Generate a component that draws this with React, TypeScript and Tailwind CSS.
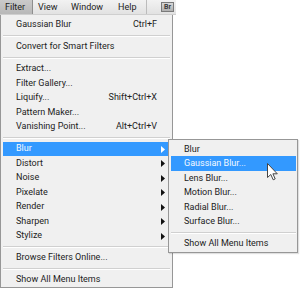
import React from "react";

type Item =
  | { t: "item"; label: string; shortcut?: string; sub?: boolean; active?: boolean }
  | { t: "sep" };

const mainItems: Item[] = [
  { t: "item", label: "Gaussian Blur", shortcut: "Ctrl+F" },
  { t: "sep" },
  { t: "item", label: "Convert for Smart Filters" },
  { t: "sep" },
  { t: "item", label: "Extract..." },
  { t: "item", label: "Filter Gallery..." },
  { t: "item", label: "Liquify...", shortcut: "Shift+Ctrl+X" },
  { t: "item", label: "Pattern Maker..." },
  { t: "item", label: "Vanishing Point...", shortcut: "Alt+Ctrl+V" },
  { t: "sep" },
  { t: "item", label: "Blur", sub: true, active: true },
  { t: "item", label: "Distort", sub: true },
  { t: "item", label: "Noise", sub: true },
  { t: "item", label: "Pixelate", sub: true },
  { t: "item", label: "Render", sub: true },
  { t: "item", label: "Sharpen", sub: true },
  { t: "item", label: "Stylize", sub: true },
  { t: "sep" },
  { t: "item", label: "Browse Filters Online..." },
  { t: "sep" },
  { t: "item", label: "Show All Menu Items" },
];

const subItems: Item[] = [
  { t: "item", label: "Blur" },
  { t: "item", label: "Gaussian Blur...", active: true },
  { t: "item", label: "Lens Blur..." },
  { t: "item", label: "Motion Blur..." },
  { t: "item", label: "Radial Blur..." },
  { t: "item", label: "Surface Blur..." },
  { t: "sep" },
  { t: "item", label: "Show All Menu Items" },
];

function Arrow({ white }: { white?: boolean }) {
  return (
    <svg width="4" height="7" viewBox="0 0 4 7" className="absolute right-[5px] top-[4px]">
      <path d="M0 0 L4 3.5 L0 7 Z" fill={white ? "#ffffff" : "#111111"} />
    </svg>
  );
}

function MenuList({ items, pl }: { items: Item[]; pl: string }) {
  return (
    <>
      {items.map((it, i) =>
        it.t === "sep" ? (
          <div key={i} className="h-[7.5px] flex flex-col justify-center">
            <div className="h-px bg-[#d0d0d0]" />
            <div className="h-px bg-white" />
          </div>
        ) : (
          <div
            key={i}
            className={
              "relative h-[14.5px] flex items-center pr-[13px] " +
              pl +
              " " +
              (it.active ? "bg-[#3399ff] text-[#f4f9ff]" : "text-[#222222]")
            }
          >
            <span className="flex-1 whitespace-nowrap leading-none">{it.label}</span>
            {it.shortcut && <span className="whitespace-nowrap leading-none">{it.shortcut}</span>}
            {it.sub && <Arrow white={it.active} />}
          </div>
        )
      )}
    </>
  );
}

export default function App() {
  return (
    <div
      className="relative w-[300px] h-[289px] bg-white overflow-hidden text-[9px]"
      style={{ fontFamily: "Roboto, 'Noto Sans', sans-serif" }}
    >
      {/* Menu bar */}
      <div className="flex h-[15px] w-[176px] items-stretch bg-gradient-to-b from-[#f2f2f2] to-[#e2e2e2] border-b border-[#cfcfcf] text-[#222222]">
        <div className="w-[33px] pl-[5px] flex items-center bg-gradient-to-b from-[#cacaca] to-[#b8b8b8] border-r border-[#8e8e8e] leading-none">
          Filter
        </div>
        <div className="w-[33px] pl-[5px] flex items-center leading-none">View</div>
        <div className="w-[46px] pl-[5px] flex items-center leading-none">Window</div>
        <div className="w-[35px] pl-[6px] flex items-center leading-none border-r border-[#bcbcbc]">Help</div>
        <div className="flex items-center pl-[14px]">
          <div className="w-[13px] h-[10px] bg-gradient-to-b from-[#d8d8d8] to-[#b0b0b0] border border-[#7a7a7a] text-[7px] font-bold text-[#3a3a3a] flex items-center justify-center leading-none">
            Br
          </div>
        </div>
      </div>

      {/* Main dropdown */}
      <div className="w-[173px] bg-[#f0f0f0] border-l border-r border-b border-[#979797] px-[2px] pt-[2.5px] pb-0">
        <MenuList items={mainItems} pl="pl-[13px]" />
      </div>

      {/* Submenu */}
      <div className="absolute left-[168px] top-[139px] w-[130px] bg-[#f0f0f0] border border-[#979797] pl-[2px] pr-[1px] pt-[1.75px] pb-[1.25px] shadow-[1px_1px_1px_rgba(0,0,0,0.12)]">
        <MenuList items={subItems} pl="pl-[13px]" />
      </div>

      {/* Cursor */}
      <svg className="absolute left-[267px] top-[163px]" width="12" height="18" viewBox="0 0 12 18">
        <path
          d="M0.5 0.5 L0.5 14.5 L3.8 11.5 L6.2 16.8 L8.2 15.9 L5.9 10.8 L10.3 10.8 Z"
          fill="#ffffff"
          stroke="#444444"
          strokeWidth="1"
          strokeLinejoin="miter"
        />
      </svg>
    </div>
  );
}
